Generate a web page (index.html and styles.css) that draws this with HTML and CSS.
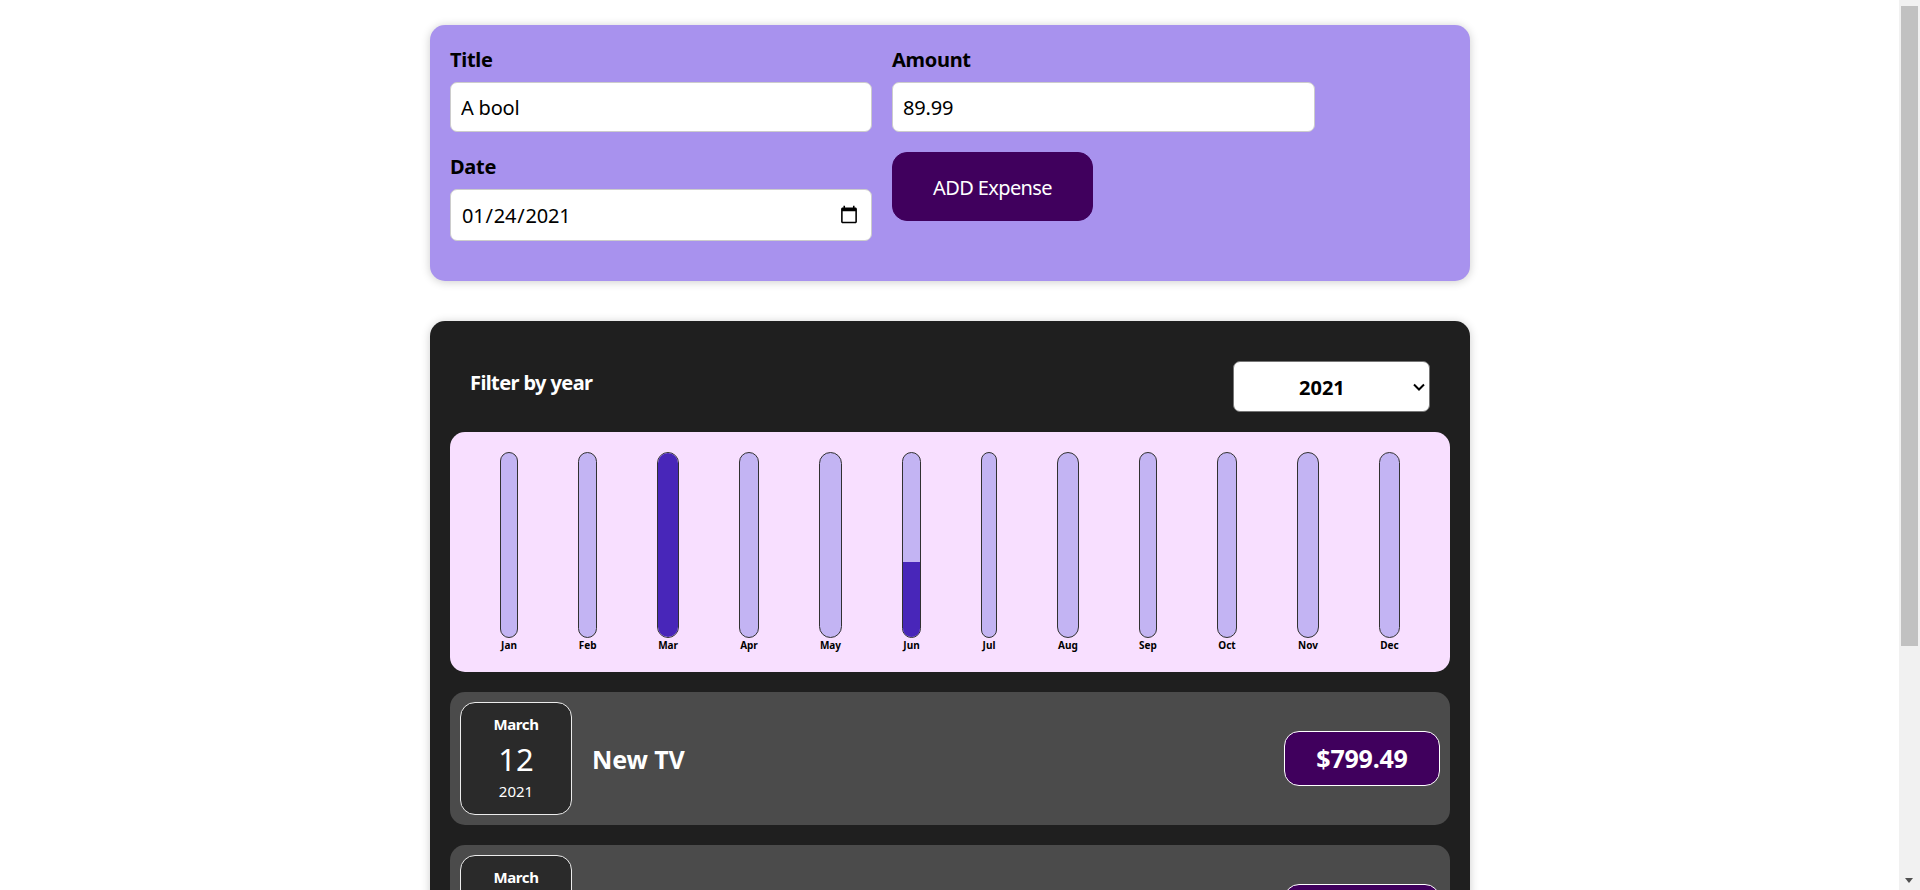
FILE: index.html
```html
<!DOCTYPE html>
<html lang="en">
<head>
  <meta charset="UTF-8" />
  <title>Expense Tracker</title>
  <link rel="stylesheet" href="styles.css">
</head>
<body>
  <div class="page">
    <section class="new-expense">
      <form class="controls">
        <div class="control">
          <label>Title</label>
          <input type="text" value="A bool">
        </div>
        <div class="control">
          <label>Amount</label>
          <input type="number" value="89.99" step="0.01">
        </div>
        <div class="control">
          <label>Date</label>
          <input type="date" value="2021-01-24">
        </div>
        <div class="actions">
          <button type="button">ADD Expense</button>
        </div>
      </form>
    </section>

    <section class="expenses">
      <div class="filter">
        <label>Filter by year</label>
        <select>
          <option>2021</option>
          <option>2020</option>
          <option>2019</option>
        </select>
      </div>

      <div class="chart">
        <div class="bar"><div class="bar-inner"></div><div class="bar-label">Jan</div></div>
        <div class="bar"><div class="bar-inner"></div><div class="bar-label">Feb</div></div>
        <div class="bar"><div class="bar-inner"><div class="bar-fill" style="height: 100%"></div></div><div class="bar-label">Mar</div></div>
        <div class="bar"><div class="bar-inner"></div><div class="bar-label">Apr</div></div>
        <div class="bar"><div class="bar-inner"></div><div class="bar-label">May</div></div>
        <div class="bar"><div class="bar-inner"><div class="bar-fill" style="height: 41%"></div></div><div class="bar-label">Jun</div></div>
        <div class="bar"><div class="bar-inner"></div><div class="bar-label">Jul</div></div>
        <div class="bar"><div class="bar-inner"></div><div class="bar-label">Aug</div></div>
        <div class="bar"><div class="bar-inner"></div><div class="bar-label">Sep</div></div>
        <div class="bar"><div class="bar-inner"></div><div class="bar-label">Oct</div></div>
        <div class="bar"><div class="bar-inner"></div><div class="bar-label">Nov</div></div>
        <div class="bar"><div class="bar-inner"></div><div class="bar-label">Dec</div></div>
      </div>

      <div class="expense">
        <div class="date">
          <div class="month">March</div>
          <div class="day">12</div>
          <div class="year">2021</div>
        </div>
        <h2>New TV</h2>
        <div class="price">$799.49</div>
      </div>

      <div class="expense">
        <div class="date">
          <div class="month">March</div>
          <div class="day">28</div>
          <div class="year">2021</div>
        </div>
        <h2>Car Insurance</h2>
        <div class="price">$294.67</div>
      </div>
    </section>
  </div>

  <div class="scrollbar">
    <div class="scrollbar-thumb"></div>
    <div class="scrollbar-arrow"></div>
  </div>
</body>
</html>
```

FILE: styles.css
```css
* {
  box-sizing: border-box;
}

body {
  margin: 0;
  padding-right: 20px;
  background: #fff;
  font-family: "Noto Sans", sans-serif;
  font-size: 20px;
}

.page {
  width: 1040px;
  margin: 25px auto 0;
}

/* the window's scrollbar */
.scrollbar {
  position: fixed;
  top: 0;
  right: 0;
  bottom: 0;
  width: 21px;
  background: #f1f1f1;
}

.scrollbar-thumb {
  position: absolute;
  top: 6px;
  left: 2px;
  width: 17px;
  height: 640px;
  background: #c1c1c1;
}

.scrollbar-arrow {
  position: absolute;
  bottom: 7px;
  left: 6px;
  border-top: 5px solid #505050;
  border-left: 4.5px solid transparent;
  border-right: 4.5px solid transparent;
}

.new-expense {
  background: #a892ee;
  padding: 20px;
  border-radius: 15px;
  box-shadow: 0 1px 10px rgba(0, 0, 0, 0.2);
  margin-bottom: 40px;
}

.controls {
  display: grid;
  grid-template-columns: 422px 423px;
  gap: 20px;
  align-items: start;
  margin-bottom: 20px;
}

.control label {
  display: block;
  padding-top: 2px;
  font-weight: bold;
  line-height: 26px;
  letter-spacing: -0.3px;
  margin-bottom: 9px;
  color: #000;
}

.control input {
  display: block;
  width: 100%;
  font: inherit;
  letter-spacing: -0.2px;
  padding: 10px;
  height: 50px;
  border: 1px solid #ccc;
  border-radius: 7px;
  background: #fff;
  color: #000;
}

.control input[type="date"] {
  height: 52px;
}

.actions button {
  font: inherit;
  letter-spacing: -0.6px;
  width: 201px;
  height: 69px;
  padding: 2px 0 0;
  border: 1px solid #40005d;
  border-radius: 15px;
  background: #40005d;
  color: #fff;
  cursor: pointer;
  white-space: nowrap;
}

.expenses {
  background: #1f1f1f;
  padding: 20px;
  border-radius: 15px;
  box-shadow: 0 1px 10px rgba(0, 0, 0, 0.2);
}

.filter {
  display: flex;
  justify-content: space-between;
  align-items: center;
  padding: 0 20px;
  margin: 20px 0;
  color: #fff;
}

.filter label {
  font-weight: bold;
  letter-spacing: -0.6px;
  margin-bottom: 8px;
}

.filter select {
  appearance: none;
  width: 197px;
  height: 51px;
  padding: 2px 20px 0 65px;
  font: inherit;
  font-weight: bold;
  border: 1px solid #767676;
  border-radius: 7px;
  background: #fff url("data:image/svg+xml,%3Csvg xmlns='http://www.w3.org/2000/svg' width='12' height='8'%3E%3Cpath d='M1 1.5l5 5 5-5' fill='none' stroke='%23000' stroke-width='2'/%3E%3C/svg%3E") no-repeat 179px 21px;
  color: #000;
}

.chart {
  display: flex;
  justify-content: space-around;
  height: 240px;
  padding: 20px;
  border-radius: 15px;
  background: #f8dfff;
  text-align: center;
  margin-bottom: 20px;
}

.bar {
  display: flex;
  flex-direction: column;
  align-items: center;
  height: 100%;
}

.bar:nth-child(1) { width: 18px; }
.bar:nth-child(2) { width: 19.3px; }
.bar:nth-child(3) { width: 21.7px; }
.bar:nth-child(4) { width: 20px; }
.bar:nth-child(5) { width: 23px; }
.bar:nth-child(6) { width: 19px; }
.bar:nth-child(7) { width: 16px; }
.bar:nth-child(8) { width: 22px; }
.bar:nth-child(9) { width: 18px; }
.bar:nth-child(10) { width: 20px; }
.bar:nth-child(11) { width: 22px; }
.bar:nth-child(12) { width: 21px; }

.bar-inner {
  display: flex;
  flex-direction: column;
  justify-content: flex-end;
  flex: 1;
  width: 100%;
  border: 1px solid #313131;
  border-radius: 15px;
  background: #c3b4f3;
  overflow: hidden;
}

.bar-fill {
  background: #4826b9;
  width: 100%;
}

.bar-label {
  font-size: 10px;
  font-weight: bold;
  line-height: 14px;
  color: #000;
  white-space: nowrap;
}

.expense {
  display: flex;
  align-items: center;
  justify-content: space-between;
  padding: 10px;
  margin-bottom: 20px;
  border-radius: 15px;
  background: #4b4b4b;
}

.date {
  display: flex;
  flex-direction: column;
  align-items: center;
  width: 112px;
  height: 113px;
  padding-top: 11px;
  border: 1px solid #ececec;
  border-radius: 15px;
  background: #2a2a2a;
  color: #fff;
}

.month {
  font-size: 15px;
  font-weight: bold;
  letter-spacing: -0.4px;
}

.day {
  font-size: 31px;
  line-height: 44px;
  margin-top: 3px;
}

.year {
  font-size: 15px;
}

.expense h2 {
  flex: 1;
  margin: 0 20px;
  font-size: 25px;
  letter-spacing: -0.1px;
  color: #fff;
}

.price {
  width: 156px;
  padding: 10px 0;
  font-size: 25px;
  font-weight: bold;
  line-height: 33px;
  letter-spacing: -0.2px;
  text-align: center;
  border: 1px solid #fff;
  border-radius: 15px;
  background: #40005d;
  color: #fff;
}
```
